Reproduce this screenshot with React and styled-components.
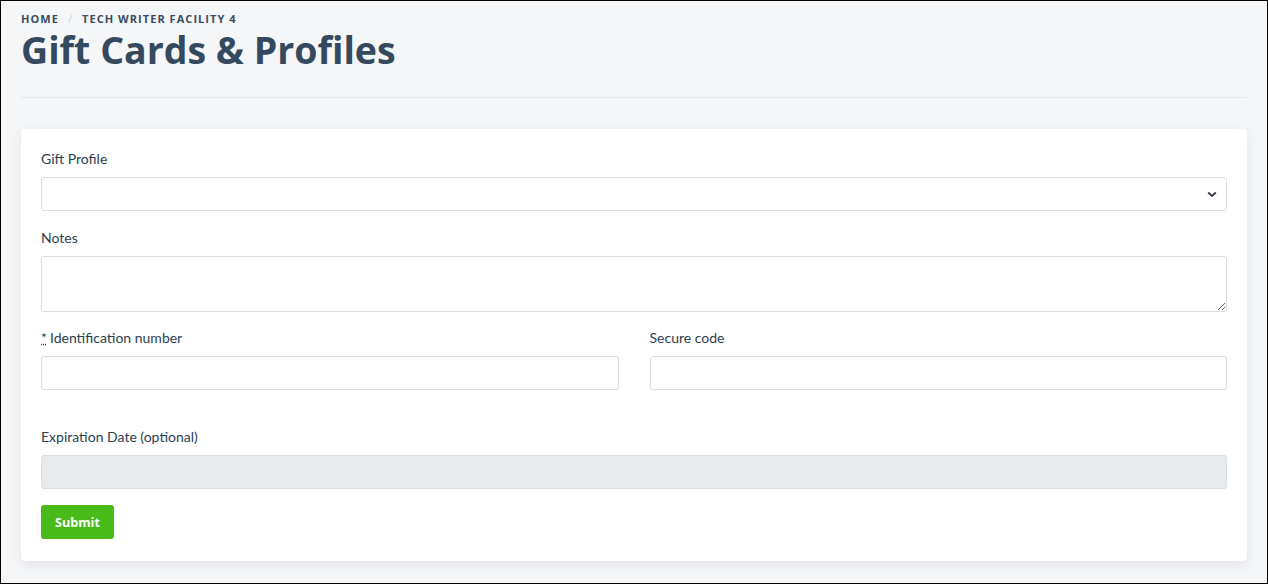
import React from 'react';
import styled, {createGlobalStyle} from 'styled-components';

const GlobalStyle = createGlobalStyle`
  html, body {
    margin: 0;
    padding: 0;
    background: #f5f6f8;
  }
  * {
    box-sizing: border-box;
  }
`;

const Page = styled.div`
  width: 1268px;
  height: 584px;
  border: 1px solid #000;
  background: #f5f6f8;
  padding: 10px 20px 0 20px;
  font-family: Lato, "Noto Sans", sans-serif;
  color: #2c3e50;
  overflow: hidden;
`;

const Crumbs = styled.nav`
  display: flex;
  align-items: center;
  gap: 9px;
  height: 14px;
  margin-top: 1px;
  margin-bottom: 3px;
  font-family: "Open Sans", "Noto Sans", sans-serif;
  font-size: 11px;
  font-weight: 700;
  letter-spacing: 1.05px;
  text-transform: uppercase;
  color: #3b4d64;
  line-height: 14px;
`;

const Sep = styled.span`
  color: #c9cfd6;
  font-weight: 400;
`;

const Title = styled.h1`
  margin: 0;
  font-family: "Open Sans", "Noto Sans", sans-serif;
  font-size: 37.5px;
  font-weight: 700;
  color: #34495e;
  line-height: 42px;
`;

const Divider = styled.hr`
  border: 0;
  border-top: 1px solid #e5e8ec;
  margin: 26px 0 31px 0;
`;

const Card = styled.form`
  background: #fff;
  border-radius: 4px;
  box-shadow: 0 4px 12px rgba(30, 40, 60, 0.09);
  padding: 20px 20px 22px 20px;
`;

const Group = styled.div`
  margin-bottom: ${props => props.mb || 17}px;
`;

const Row = styled.div`
  display: grid;
  grid-template-columns: 1fr 1fr;
  column-gap: 31px;
`;

const Label = styled.label`
  display: block;
  font-size: 14px;
  line-height: 20px;
  margin-bottom: 8px;
  color: #2c3e50;
`;

const Req = styled.abbr`
  text-decoration: underline dotted;
  cursor: help;
  margin-right: 3px;
`;

const fieldCss = `
  display: block;
  width: 100%;
  border: 1px solid #dadde2;
  border-radius: 3px;
  background: #fff;
  font-family: Lato, "Noto Sans", sans-serif;
  font-size: 14px;
  color: #2c3e50;
  padding: 6px 10px;
  outline: none;
`;

const Select = styled.div`
  ${fieldCss}
  height: 34px;
  display: flex;
  align-items: center;
  justify-content: flex-end;
  padding-right: 9px;
`;

const Input = styled.input`
  ${fieldCss}
  height: 34px;
  background: ${props => (props.disabled ? '#e8ebee' : '#fff')};
`;

const TextArea = styled.textarea`
  ${fieldCss}
  height: 56px;
  resize: vertical;
`;

const Submit = styled.button.attrs({type: 'button'})`
  height: 34px;
  padding: 0 14px;
  border: 0;
  border-radius: 3px;
  background: #48ba1a;
  color: #fff;
  font-family: "Open Sans", "Noto Sans", sans-serif;
  font-size: 12.6px;
  font-weight: 700;
`;

const Chevron = () => (
  <svg width="10" height="7" viewBox="0 0 10 7">
    <path d="M1.2 1.5 L5 5 L8.8 1.5" fill="none" stroke="#3b4350" strokeWidth="2" />
  </svg>
);

export default function App() {
  return (
    <Page>
      <GlobalStyle />
      <Crumbs>
        <span>Home</span>
        <Sep>/</Sep>
        <span>Tech Writer Facility 4</span>
      </Crumbs>
      <Title>Gift Cards &amp; Profiles</Title>
      <Divider />
      <Card>
        <Group>
          <Label>Gift Profile</Label>
          <Select>
            <Chevron />
          </Select>
        </Group>
        <Group mb={16}>
          <Label>Notes</Label>
          <TextArea />
        </Group>
        <Row>
          <Group mb={37}>
            <Label>
              <Req title="required">*</Req>Identification number
            </Label>
            <Input />
          </Group>
          <Group mb={37}>
            <Label>Secure code</Label>
            <Input />
          </Group>
        </Row>
        <Group mb={16}>
          <Label>Expiration Date (optional)</Label>
          <Input disabled />
        </Group>
        <Submit>Submit</Submit>
      </Card>
    </Page>
  );
}
